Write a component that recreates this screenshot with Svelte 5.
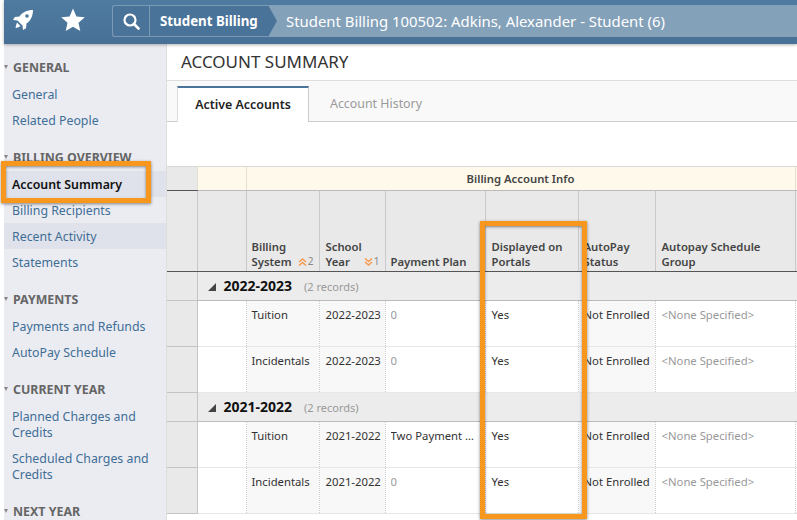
<script>
  const nav = [
    { title: 'GENERAL', links: [{ label: 'General' }, { label: 'Related People' }] },
    {
      title: 'BILLING OVERVIEW',
      links: [
        { label: 'Account Summary', state: 'selected' },
        { label: 'Billing Recipients' },
        { label: 'Recent Activity', state: 'hover' },
        { label: 'Statements' }
      ]
    },
    { title: 'PAYMENTS', links: [{ label: 'Payments and Refunds' }, { label: 'AutoPay Schedule' }] },
    {
      title: 'CURRENT YEAR',
      links: [{ label: 'Planned Charges and Credits' }, { label: 'Scheduled Charges and Credits' }]
    },
    { title: 'NEXT YEAR', links: [] }
  ];

  const groups = [
    {
      year: '2022-2023',
      rows: [
        { system: 'Tuition', plan: '0' },
        { system: 'Incidentals', plan: '0' }
      ]
    },
    {
      year: '2021-2022',
      rows: [
        { system: 'Tuition', plan: 'Two Payment Plan' },
        { system: 'Incidentals', plan: '0' }
      ]
    }
  ];
</script>

<div class="page">
  <header class="topbar">
    <div class="top-icons">
      <svg viewBox="0 0 20 20" width="20" height="20">
        <path fill="#fff" fill-rule="evenodd" d="M20 0C14 0 9 2.500 6.500 6.500L1.800 7 0 10l4.500.5 5 5 .5 4.500 3-1.800.5-4.700C17.500 11 20 6 20 0zM14 4.200a1.800 1.800 0 1 1 0 3.600 1.800 1.800 0 0 1 0-3.600z"/>
        <path fill="#fff" d="M4 12.500l3.500 3.500-2.500 1.500-2.500.5.500-2.500z"/>
      </svg>
      <svg viewBox="0 0 24 24" width="24" height="24">
        <path fill="#fff" d="M12 .5l3.400 7.900 8.400.8-6.300 5.600 1.800 8.200L12 18.700 4.700 23l1.800-8.200L.2 9.200l8.400-.8z"/>
      </svg>
    </div>
    <div class="crumbs">
      <div class="search">
        <svg viewBox="0 0 18 18" width="18" height="18">
          <circle cx="8" cy="8" r="5.500" fill="none" stroke="#fff" stroke-width="2.200"/>
          <path d="M12 12l4.500 4.500" stroke="#fff" stroke-width="2.600" stroke-linecap="round"/>
        </svg>
      </div>
      <div class="crumb-app">Student Billing</div>
      <div class="crumb-page">Student Billing 100502: Adkins, Alexander - Student (6)</div>
    </div>
  </header>

  <div class="body">
    <aside class="sidebar">
      {#each nav as section}
        <section class="nav-section">
          <h3><span class="caret"></span>{section.title}</h3>
          {#each section.links as link}
            <a href="#top" class="nav-link {link.state ?? ''}">{link.label}</a>
          {/each}
        </section>
      {/each}
    </aside>

    <main class="content">
      <h1>ACCOUNT SUMMARY</h1>
      <div class="tabs">
        <button class="tab active">Active Accounts</button>
        <button class="tab">Account History</button>
      </div>

      <table>
        <colgroup>
          <col style="width:30px" />
          <col style="width:49px" />
          <col style="width:73px" />
          <col style="width:66px" />
          <col style="width:100px" />
          <col style="width:93px" />
          <col style="width:77px" />
          <col style="width:140px" />
          <col style="width:2px" />
        </colgroup>
        <thead>
          <tr class="band">
            <th class="gutter"></th>
            <th></th>
            <th colspan="6" class="band-title">Billing Account Info</th>
            <th></th>
          </tr>
          <tr class="heads">
            <th class="gutter"></th>
            <th></th>
            <th>
              <div class="sortable">
                Billing<br />System
                <span class="sort">
                  <svg viewBox="0 0 9 8" width="9" height="8">
                    <path d="M1 4l3.500-3L8 4M1 7.500l3.500-3 3.500 3" fill="none" stroke="#f79b4e" stroke-width="1.500"/>
                  </svg>2
                </span>
              </div>
            </th>
            <th class="wide">
              <div class="sortable">
                School<br />Year
                <span class="sort">
                  <svg viewBox="0 0 9 8" width="9" height="8">
                    <path d="M1 .5l3.500 3 3.500-3M1 4l3.500 3L8 4" fill="none" stroke="#f79b4e" stroke-width="1.500"/>
                  </svg>1
                </span>
              </div>
            </th>
            <th>Payment Plan</th>
            <th class="wide">Displayed on<br />Portals</th>
            <th>AutoPay<br />Status</th>
            <th class="wide">Autopay Schedule<br />Group</th>
            <th></th>
          </tr>
        </thead>
        {#each groups as group}
          <tbody>
            <tr class="group">
              <td class="gutter"></td>
              <td colspan="8">
                <span class="tri"></span><strong>{group.year}</strong><span class="count">(2 records)</span>
              </td>
            </tr>
            {#each group.rows as row}
              <tr class="row">
                <td class="gutter"></td>
                <td></td>
                <td class="shade">{row.system}</td>
                <td class="shade wide">{group.year}</td>
                <td class:muted={row.plan === '0'}><div class="clip">{row.plan}</div></td>
                <td class="wide">Yes</td>
                <td class="shade">Not Enrolled</td>
                <td class="muted wide">&lt;None Specified&gt;</td>
                <td></td>
              </tr>
            {/each}
          </tbody>
        {/each}
      </table>
    </main>
  </div>

  <div class="callout nav-callout"></div>
  <div class="callout col-callout"></div>
</div>

<style>
  :global(body) {
    margin: 0;
    background: #fff;
  }

  .page {
    position: relative;
    width: 797px;
    height: 520px;
    overflow: hidden;
    padding-left: 4px;
    box-sizing: border-box;
    font-family: "Noto Sans", sans-serif;
    font-size: 11.3px;
    color: #333;
    background: #fff;
  }

  .topbar {
    position: relative;
    z-index: 2;
    height: 44px;
    display: flex;
    align-items: flex-start;
    background: linear-gradient(#4f7ba0, #487096);
    box-shadow: 0 1px 3px rgba(0, 0, 0, 0.3);
  }

  .top-icons {
    width: 108px;
    height: 40px;
    display: flex;
    align-items: center;
    gap: 28px;
    padding-left: 9px;
    box-sizing: border-box;
  }

  .crumbs {
    flex: 1;
    height: 32px;
    margin-top: 5px;
    display: flex;
    background: #84a1ba;
    border-radius: 3px 0 0 3px;
  }

  .search {
    width: 38px;
    flex: none;
    display: flex;
    align-items: center;
    justify-content: center;
    background: #4a7399;
    border: 1px solid #7d9ab4;
    border-radius: 3px 0 0 3px;
    box-sizing: border-box;
  }

  .crumb-app {
    position: relative;
    width: 118px;
    flex: none;
    display: flex;
    align-items: center;
    padding-left: 10px;
    box-sizing: border-box;
    background: #4a7399;
    border-top: 1px solid #7d9ab4;
    border-bottom: 1px solid #7d9ab4;
    color: #fff;
    font-weight: 700;
    font-size: 13.300px;
  }

  .crumb-app::after {
    content: "";
    position: absolute;
    left: 100%;
    top: -1px;
    border-left: 9px solid #4a7399;
    border-top: 16px solid transparent;
    border-bottom: 16px solid transparent;
  }

  .crumb-page {
    padding-left: 18px;
    display: flex;
    align-items: center;
    color: #fff;
    font-size: 14.900px;
    white-space: nowrap;
  }

  .body {
    display: flex;
    height: 476px;
  }

  .sidebar {
    width: 163px;
    flex: none;
    padding-top: 10px;
    box-sizing: border-box;
    background: #ebecf2;
    border-right: 1px solid #ddd;
    overflow: hidden;
  }

  .nav-section {
    margin-bottom: 11px;
  }

  .nav-section h3 {
    position: relative;
    margin: 0 0 1px;
    height: 26px;
    line-height: 27px;
    padding-left: 9px;
    font-size: 12.400px;
    font-weight: 700;
    color: #666;
  }

  .caret {
    position: absolute;
    left: 0;
    top: 11px;
    border-top: 4px solid #888;
    border-left: 2px solid transparent;
    border-right: 2px solid transparent;
  }

  .nav-link {
    display: block;
    padding: 6px 8px 4px;
    line-height: 16px;
    font-size: 12.350px;
    color: #3f6e96;
    text-decoration: none;
  }

  .nav-link.selected {
    background: #dfe2ea;
    color: #111;
    font-weight: 600;
  }

  .nav-link.hover {
    background: #dfe2ea;
  }

  .content {
    flex: 1;
    min-width: 0;
  }

  h1 {
    margin: 0;
    height: 36px;
    line-height: 36px;
    padding-left: 14px;
    font-size: 17px;
    font-weight: 400;
    color: #333;
  }

  .tabs {
    height: 42px;
    display: flex;
    align-items: flex-end;
    gap: 2px;
    padding-left: 10px;
    box-sizing: border-box;
    border-top: 1px solid #ddd;
    border-bottom: 1px solid #ccc;
    background: #f9f9f9;
    margin-bottom: 44px;
  }

  .tab {
    height: 36px;
    padding: 0 19px;
    margin: 0;
    border: 0;
    background: none;
    font: inherit;
    font-size: 12.400px;
    color: #999;
  }

  .tab.active {
    position: relative;
    top: 1px;
    width: 132px;
    padding: 0 0 2px;
    background: #fff;
    color: #222;
    font-weight: 600;
    border-top: 2px solid #4a7399;
    border-left: 1px solid #ddd;
    border-right: 1px solid #ccc;
  }

  table {
    width: 630px;
    table-layout: fixed;
    border-collapse: collapse;
  }

  th {
    padding: 0;
    font-weight: 600;
    color: #444;
    text-align: left;
  }

  .band {
    height: 24px;
    background: #fef9ea;
    border-top: 1px solid #d8d8d8;
  }

  .band th {
    border-right: 1px solid #e3e0d2;
    border-bottom: 1px solid #bbb;
  }

  .band th.gutter {
    border-bottom: 1px solid #555;
  }

  .band-title {
    text-align: center;
  }

  .heads {
    height: 81px;
    background: #e9e9e9;
  }

  .heads th {
    padding: 0 5px 2px;
    vertical-align: bottom;
    line-height: 15px;
    border-right: 1px solid #c9c9c9;
    border-bottom: 1px solid #555;
  }

  .heads th.wide {
    padding-left: 6px;
  }

  .gutter {
    background: #e9e9e9;
    border-right: 1px solid #c4c4c4;
  }

  .sortable {
    position: relative;
  }

  .sort {
    position: absolute;
    right: 0;
    bottom: 0;
    display: flex;
    align-items: center;
    gap: 1px;
    color: #888;
    font-weight: 400;
    font-size: 10px;
    line-height: 15px;
  }

  .group {
    height: 29px;
    background: #ececec;
  }

  .group td {
    padding: 0 0 2px 10px;
    border-bottom: 1px solid #bbb;
  }

  .group td.gutter {
    padding: 0;
    border-bottom: 1px solid #c4c4c4;
  }

  .tri {
    display: inline-block;
    margin-right: 8px;
    border-bottom: 8px solid #444;
    border-left: 8px solid transparent;
  }

  .group strong {
    font-size: 14px;
    color: #111;
  }

  .count {
    margin-left: 12px;
    color: #999;
    font-size: 11px;
  }

  .row {
    height: 46px;
    border-bottom: 1px solid #e6e6e6;
  }

  .row td {
    padding: 6px 5px 0;
    vertical-align: top;
    line-height: 16px;
    white-space: nowrap;
    overflow: hidden;
    color: #333;
    border-right: 1px dotted #ccc;
  }

  .row td.wide {
    padding-left: 6px;
  }

  .row td.gutter {
    border-right: 1px solid #c4c4c4;
    border-bottom: 1px solid #c4c4c4;
  }

  .row td.shade {
    background: #f8f8f8;
  }

  .row td.muted {
    color: #999;
  }

  .clip {
    width: 87px;
    overflow: hidden;
    text-overflow: ellipsis;
  }

  .callout {
    position: absolute;
    z-index: 3;
    box-sizing: border-box;
    border: 5px solid #f7971e;
    box-shadow: 0 1px 3px rgba(0, 0, 0, 0.45), inset 0 1px 3px rgba(0, 0, 0, 0.45);
  }

  .nav-callout {
    left: 1px;
    top: 161px;
    width: 150px;
    height: 42px;
  }

  .col-callout {
    left: 480px;
    top: 221px;
    width: 107px;
    height: 298px;
  }
</style>
